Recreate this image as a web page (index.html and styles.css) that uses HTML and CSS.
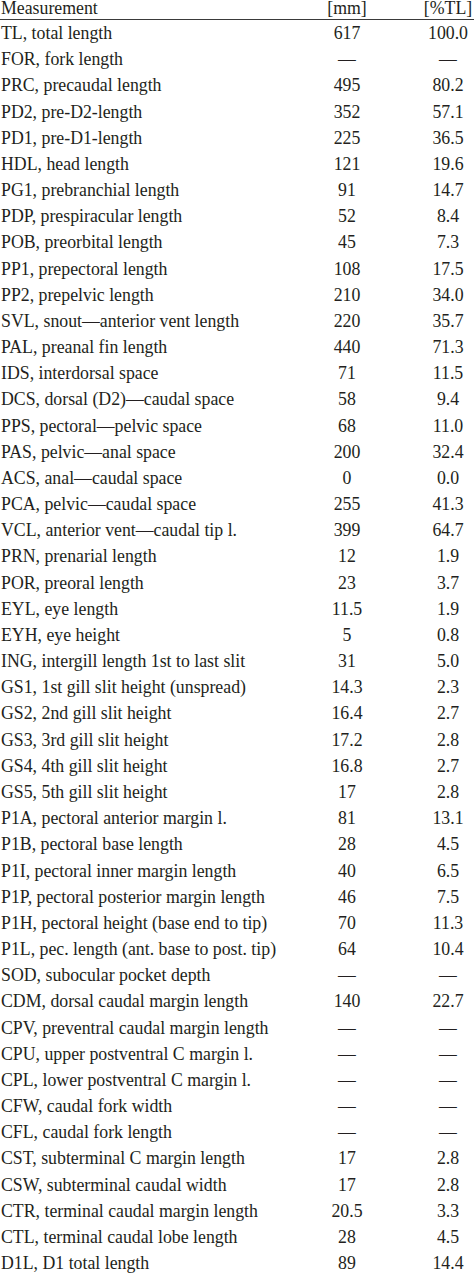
FILE: index.html
```html
<!DOCTYPE html>
<html>
<head>
<meta charset="utf-8">
<link rel="stylesheet" href="styles.css">
</head>
<body>
<div class="table">
  <div class="row head"><span class="name">Measurement</span><span class="mm">[mm]</span><span class="pct">[%TL]</span></div>
  <div class="row"><span class="name">TL, total length</span><span class="mm">617</span><span class="pct">100.0</span></div>
  <div class="row"><span class="name">FOR, fork length</span><span class="mm">—</span><span class="pct">—</span></div>
  <div class="row"><span class="name">PRC, precaudal length</span><span class="mm">495</span><span class="pct">80.2</span></div>
  <div class="row"><span class="name">PD2, pre-D2-length</span><span class="mm">352</span><span class="pct">57.1</span></div>
  <div class="row"><span class="name">PD1, pre-D1-length</span><span class="mm">225</span><span class="pct">36.5</span></div>
  <div class="row"><span class="name">HDL, head length</span><span class="mm">121</span><span class="pct">19.6</span></div>
  <div class="row"><span class="name">PG1, prebranchial length</span><span class="mm">91</span><span class="pct">14.7</span></div>
  <div class="row"><span class="name">PDP, prespiracular length</span><span class="mm">52</span><span class="pct">8.4</span></div>
  <div class="row"><span class="name">POB, preorbital length</span><span class="mm">45</span><span class="pct">7.3</span></div>
  <div class="row"><span class="name">PP1, prepectoral length</span><span class="mm">108</span><span class="pct">17.5</span></div>
  <div class="row"><span class="name">PP2, prepelvic length</span><span class="mm">210</span><span class="pct">34.0</span></div>
  <div class="row"><span class="name">SVL, snout—anterior vent length</span><span class="mm">220</span><span class="pct">35.7</span></div>
  <div class="row"><span class="name">PAL, preanal fin length</span><span class="mm">440</span><span class="pct">71.3</span></div>
  <div class="row"><span class="name">IDS, interdorsal space</span><span class="mm">71</span><span class="pct">11.5</span></div>
  <div class="row"><span class="name">DCS, dorsal (D2)—caudal space</span><span class="mm">58</span><span class="pct">9.4</span></div>
  <div class="row"><span class="name">PPS, pectoral—pelvic space</span><span class="mm">68</span><span class="pct">11.0</span></div>
  <div class="row"><span class="name">PAS, pelvic—anal space</span><span class="mm">200</span><span class="pct">32.4</span></div>
  <div class="row"><span class="name">ACS, anal—caudal space</span><span class="mm">0</span><span class="pct">0.0</span></div>
  <div class="row"><span class="name">PCA, pelvic—caudal space</span><span class="mm">255</span><span class="pct">41.3</span></div>
  <div class="row"><span class="name">VCL, anterior vent—caudal tip l.</span><span class="mm">399</span><span class="pct">64.7</span></div>
  <div class="row"><span class="name">PRN, prenarial length</span><span class="mm">12</span><span class="pct">1.9</span></div>
  <div class="row"><span class="name">POR, preoral length</span><span class="mm">23</span><span class="pct">3.7</span></div>
  <div class="row"><span class="name">EYL, eye length</span><span class="mm">11.5</span><span class="pct">1.9</span></div>
  <div class="row"><span class="name">EYH, eye height</span><span class="mm">5</span><span class="pct">0.8</span></div>
  <div class="row"><span class="name">ING, intergill length 1st to last slit</span><span class="mm">31</span><span class="pct">5.0</span></div>
  <div class="row"><span class="name">GS1, 1st gill slit height (unspread)</span><span class="mm">14.3</span><span class="pct">2.3</span></div>
  <div class="row"><span class="name">GS2, 2nd gill slit height</span><span class="mm">16.4</span><span class="pct">2.7</span></div>
  <div class="row"><span class="name">GS3, 3rd gill slit height</span><span class="mm">17.2</span><span class="pct">2.8</span></div>
  <div class="row"><span class="name">GS4, 4th gill slit height</span><span class="mm">16.8</span><span class="pct">2.7</span></div>
  <div class="row"><span class="name">GS5, 5th gill slit height</span><span class="mm">17</span><span class="pct">2.8</span></div>
  <div class="row"><span class="name">P1A, pectoral anterior margin l.</span><span class="mm">81</span><span class="pct">13.1</span></div>
  <div class="row"><span class="name">P1B, pectoral base length</span><span class="mm">28</span><span class="pct">4.5</span></div>
  <div class="row"><span class="name">P1I, pectoral inner margin length</span><span class="mm">40</span><span class="pct">6.5</span></div>
  <div class="row"><span class="name">P1P, pectoral posterior margin length</span><span class="mm">46</span><span class="pct">7.5</span></div>
  <div class="row"><span class="name">P1H, pectoral height (base end to tip)</span><span class="mm">70</span><span class="pct">11.3</span></div>
  <div class="row"><span class="name">P1L, pec. length (ant. base to post. tip)</span><span class="mm">64</span><span class="pct">10.4</span></div>
  <div class="row"><span class="name">SOD, subocular pocket depth</span><span class="mm">—</span><span class="pct">—</span></div>
  <div class="row"><span class="name">CDM, dorsal caudal margin length</span><span class="mm">140</span><span class="pct">22.7</span></div>
  <div class="row"><span class="name">CPV, preventral caudal margin length</span><span class="mm">—</span><span class="pct">—</span></div>
  <div class="row"><span class="name">CPU, upper postventral C margin l.</span><span class="mm">—</span><span class="pct">—</span></div>
  <div class="row"><span class="name">CPL, lower postventral C margin l.</span><span class="mm">—</span><span class="pct">—</span></div>
  <div class="row"><span class="name">CFW, caudal fork width</span><span class="mm">—</span><span class="pct">—</span></div>
  <div class="row"><span class="name">CFL, caudal fork length</span><span class="mm">—</span><span class="pct">—</span></div>
  <div class="row"><span class="name">CST, subterminal C margin length</span><span class="mm">17</span><span class="pct">2.8</span></div>
  <div class="row"><span class="name">CSW, subterminal caudal width</span><span class="mm">17</span><span class="pct">2.8</span></div>
  <div class="row"><span class="name">CTR, terminal caudal margin length</span><span class="mm">20.5</span><span class="pct">3.3</span></div>
  <div class="row"><span class="name">CTL, terminal caudal lobe length</span><span class="mm">28</span><span class="pct">4.5</span></div>
  <div class="row"><span class="name">D1L, D1 total length</span><span class="mm">89</span><span class="pct">14.4</span></div>
</div>
</body>
</html>
```
FILE: styles.css
```css
html, body {
  margin: 0;
  padding: 0;
  background: #ffffff;
}
body {
  width: 474px;
  font-family: "Liberation Serif", "Times New Roman", serif;
  font-size: 17.8px;
  color: #231f20;
}
.table {
  display: flex;
  flex-direction: column;
}
.row {
  display: grid;
  grid-template-columns: 306px 82px 86px;
  line-height: 26.18px;
  height: 26.18px;
  white-space: nowrap;
}
.row.head {
  line-height: 16px;
  height: 16px;
  padding-bottom: 3px;
  border-bottom: 1.3px solid #3a3a3a;
}
.name {
  padding-left: 1px;
}
.mm {
  text-align: center;
}
.pct {
  text-align: center;
  padding-left: 34px;
}
```
